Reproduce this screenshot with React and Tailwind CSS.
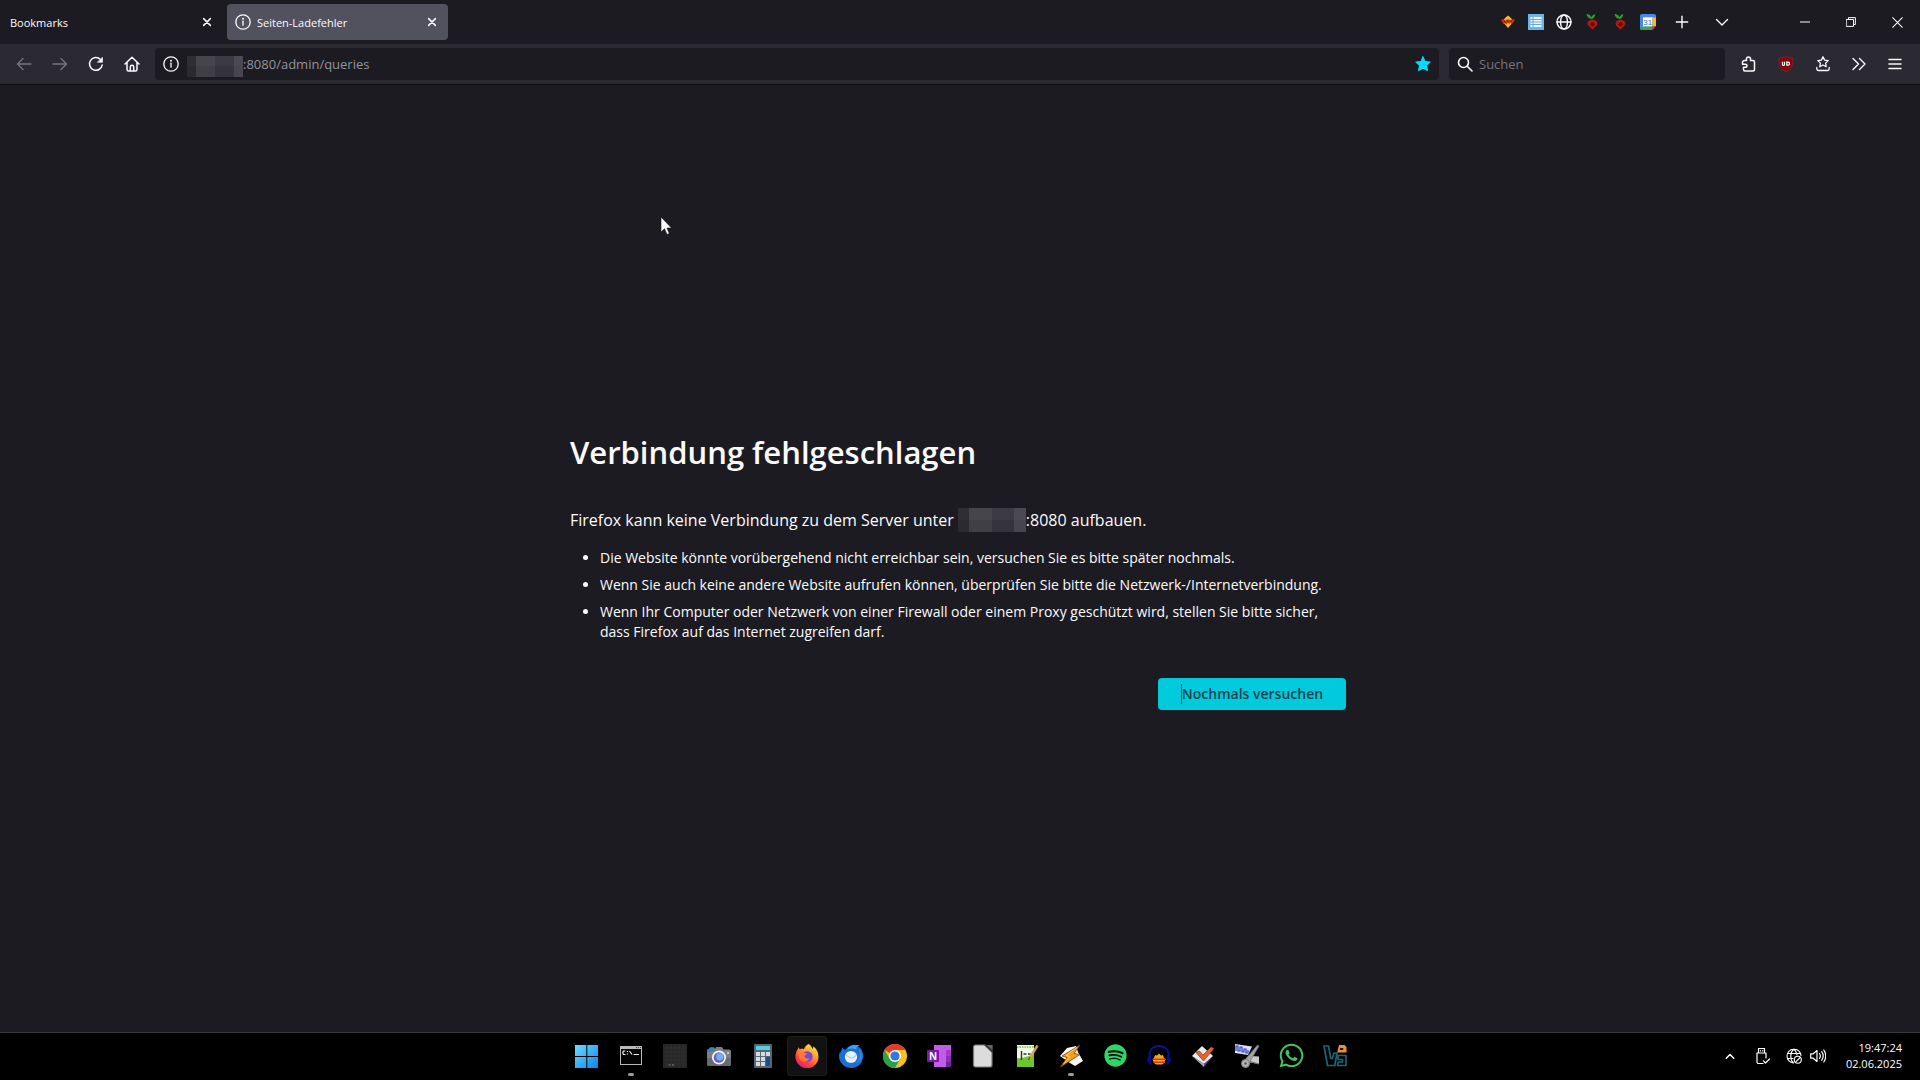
import { FaSpotify, FaWhatsapp } from 'react-icons/fa'

// Thin white line icon used in the browser chrome
function Line({ size = 16, width = 1.4, className = '', children }) {
    return (
        <svg
            width={size}
            height={size}
            viewBox="0 0 16 16"
            fill="none"
            stroke="currentColor"
            strokeWidth={width}
            strokeLinecap="round"
            strokeLinejoin="round"
            className={`shrink-0 ${className}`}
            aria-hidden="true"
        >
            {children}
        </svg>
    )
}

function InfoIcon() {
    return (
        <Line width={1.3}>
            <circle cx="8" cy="8" r="7.2" />
            <path d="M8 7.2v4" />
            <circle cx="8" cy="4.7" r=".4" fill="currentColor" />
        </Line>
    )
}

function CloseIcon() {
    return (
        <Line size={12} width={2}>
            <path d="M3.5 3.5l9 9M12.5 3.5l-9 9" />
        </Line>
    )
}

// Pixelated block that hides a host name
function Redacted({ className }) {
    return (
        <span className={`inline-grid grid-cols-[1fr_2fr_2fr_1fr] overflow-hidden ${className}`}>
            <span className="bg-[#2f2e35]" />
            <span className="bg-[#45454b]" />
            <span className="bg-[#3c3b43]" />
            <span className="bg-[#4b4a52]" />
            <span className="bg-[#2b2a31]" />
            <span className="bg-[#3f3f45]" />
            <span className="bg-[#35343c]" />
            <span className="bg-[#47464e]" />
        </span>
    )
}

/* Pinned tab icons */

function SupermanIcon() {
    return (
        <svg width="16" height="16" viewBox="0 0 16 16">
            <path d="M5 4l3-2.500L11 4l2.500 3.500L8 14 2.500 7.500z" fill="#f5bd1f" />
            <path d="M1 5.500h3.500l1 1.500 1.300-1.500h2.700l.5 1 1-1H15L13.500 8l-2 2-1-1.500L9 10 8 8.500 6.500 10.500 5 9l-1.500 1z" fill="#cf3314" />
            <path d="M4 7l2 1.500M7 6l1 2M10 7l2 .5" stroke="#5c1606" strokeWidth=".8" />
        </svg>
    )
}

function ListIcon() {
    return (
        <svg width="16" height="16" viewBox="0 0 16 16">
            <path d="M0 0h16v16H0z" fill="#6fb2e6" />
            <path d="M2.500 3h11v10h-11z" fill="#eaf5fd" />
            <path d="M2.500 5.500h11M2.500 8h11M2.500 10.500h11M5 3v10" stroke="#5ba3dc" strokeWidth=".9" />
        </svg>
    )
}

function GlobeIcon() {
    return (
        <Line width={1.4}>
            <circle cx="8" cy="8" r="7" />
            <ellipse cx="8" cy="8" rx="3.500" ry="7" />
            <path d="M1 8h14" />
        </Line>
    )
}

function PiholeIcon() {
    return (
        <svg width="16" height="18" viewBox="0 0 16 18">
            <path d="M7.500 6C4.500 5.500 2.800 3.500 2.500 1c2.500.2 4.300 1.300 5 3.200.8-1.800 2-2.700 3.800-2.900C11 4 9.700 5.500 7.500 6z" fill="#2f9e32" />
            <path d="M8.500 6.500c1.200.7 2 .4 3.400 1.300 1.700 1.200 1.800 2.800 1.100 4.300-.8 1.600-2.800 2.500-4.500 4.600-1.800-2.100-3.900-3-4.600-4.600-.7-1.500-.6-3.100 1-4.300 1.500-.9 2.400-.6 3.600-1.300z" fill="#b5170e" />
            <circle cx="8.500" cy="11.300" r="2" fill="#5e0805" />
        </svg>
    )
}

function CalendarIcon() {
    return (
        <svg width="16" height="16" viewBox="0 0 16 16">
            <path d="M2 0h12a2 2 0 012 2v3H0V2a2 2 0 012-2z" fill="#4a86ee" />
            <path d="M0 4h4v12H2a2 2 0 01-2-2z" fill="#4a86ee" />
            <path d="M12.500 3.500H16V12h-3.500z" fill="#fbbc04" />
            <path d="M0 12.500h12.500V16H2a2 2 0 01-2-2z" fill="#34a853" />
            <path d="M12.500 12H16l-3.500 4z" fill="#ea4335" />
            <path d="M3 3.300h9.500v9.200H3z" fill="#fff" />
            <text x="7.800" y="10.800" textAnchor="middle" fontSize="8" fontFamily="Liberation Sans, sans-serif" fill="#2f6cd0">31</text>
        </svg>
    )
}

/* Taskbar icons */

function WindowsIcon() {
    return (
        <svg width="24" height="24" viewBox="0 0 24 24">
            <defs>
                <linearGradient id="win" x1="0" y1="0" x2="1" y2="1">
                    <stop offset="0" stopColor="#6bdcff" />
                    <stop offset="1" stopColor="#0a86ea" />
                </linearGradient>
            </defs>
            <path d="M0 1h11.300v11H0zM12.300 1H23v11H12.300zM0 13h11.300v11H0zM12.300 13H23v11H12.300z" fill="url(#win)" />
        </svg>
    )
}

function TerminalIcon() {
    return (
        <svg width="24" height="24" viewBox="0 0 24 24">
            <path d="M1 2h22v19H1z" fill="#b9b9b9" />
            <path d="M2 5h20v15H2z" fill="#050505" />
            <path d="M17 3.500h1M19 3.500h1M21 3.500h1" stroke="#444" />
            <path d="M6.500 7H4.500L4 7.500v2.500l.5.500h2M8.500 7v1M8.500 9.500v1M10.500 7l2.500 3.500M14.500 10.500H20" stroke="#eee" strokeWidth="1.200" fill="none" />
        </svg>
    )
}

function KeypadIcon() {
    return (
        <svg width="24" height="24" viewBox="0 0 24 24">
            <path d="M0 0h24v24H0z" fill="#262626" />
            <path d="M0 4h24M0 8h24M0 12h24M0 16h24M0 20h24M4 0v24M8 0v24M12 0v24M16 0v24M20 0v24" stroke="#343434" strokeWidth=".7" />
            <path d="M5.500 21h2M9 21h2" stroke="#888" />
        </svg>
    )
}

function CameraIcon() {
    return (
        <svg width="24" height="24" viewBox="0 0 24 24">
            <path d="M2 5l1-1.500h4L8 5l1-2h6l1.500 2.500H22a2 2 0 012 2V20a2 2 0 01-2 2H2a2 2 0 01-2-2V7a2 2 0 012-2z" fill="#7a8087" />
            <path d="M0 8V7a2 2 0 012-2l1-1.500h4L8 5 6 8z" fill="#3c87a7" />
            <path d="M0 14h24v6a2 2 0 01-2 2H2a2 2 0 01-2-2z" fill="#666b71" />
            <circle cx="12" cy="13.500" r="7" fill="#f4f4f6" />
            <circle cx="12" cy="13.500" r="5.300" fill="#6a5fc5" />
            <circle cx="12.800" cy="12.700" r="3.700" fill="#78aef0" />
            <circle cx="21" cy="9" r="1" fill="#d9e2e7" />
        </svg>
    )
}

function CalculatorIcon() {
    return (
        <svg width="24" height="24" viewBox="0 0 24 24">
            <rect x="3" width="18" height="24" rx="1" fill="#596571" />
            <path d="M5 2h14v4H5z" fill="#52cfe3" />
            <path d="M5 8h4v4H5zM10 8h4v4h-4zM5 13h4v4H5zM10 13h4v4h-4zM5 18h4v4H5zM10 18h4v4h-4zM15 8h4v4h-4z" fill="#d6dbe0" />
            <path d="M15 13h4v9h-4z" fill="#17508d" />
        </svg>
    )
}

function FirefoxIcon() {
    return (
        <svg width="24" height="24" viewBox="0 0 24 24">
            <defs>
                <linearGradient id="fox" x1=".85" y1="0" x2=".25" y2="1">
                    <stop offset="0" stopColor="#fff04a" />
                    <stop offset=".4" stopColor="#ff9a2b" />
                    <stop offset=".7" stopColor="#ff4a3d" />
                    <stop offset="1" stopColor="#e5127f" />
                </linearGradient>
            </defs>
            <path d="M13.500 0c2.500 1.300 3.300 3 3.800 4.800 1-.6 1-1.600.9-2.600 3.300 2.500 5.300 6.200 5.300 10.300A11.500 11.500 0 01.500 13c0-3.500 1-6 2.500-8.200L3.500 3c.3 1 .7 1.600 1.300 2.300 1.300-.5 2.700-.6 4-.1.8-2.200 2.400-4 4.700-5.200z" fill="url(#fox)" />
            <circle cx="12.300" cy="12.500" r="5.300" fill="#7548dc" />
            <path d="M3.300 8.500c2.200-1.300 4.500-1 6.300.4 1 0 2.100.2 2.500.8-.3 1-2.300 1.200-2.600 2.300.3 2.500 3.200 3.200 5.300 2-2.300 5.300-9.500 4.200-10.800-.5z" fill="#ff7a31" />
        </svg>
    )
}

function ThunderbirdIcon() {
    return (
        <svg width="24" height="24" viewBox="0 0 24 24">
            <path d="M3.500 3.500C4.200 5 5.500 5.800 7 5.500 9 2 14.500-.500 20.500 1.500c-.8.3-1.200.7-1.500 1.200C22.500 3.500 24 8 24 12.500 24 19 19 24 12.500 24 6 24 0 19.500 0 12c0-2 .7-3.500 1.500-4.500l.3 2C2 7 2.500 5 3.500 3.500z" fill="#1a6fd4" />
            <path d="M8 5.500C10.500 1.500 15.500.300 20.500 1.500c-3 .8-3.700 2.200-3 4.500C15 4.300 11.500 4 8 5.500z" fill="#3ba5f4" />
            <path d="M19.500 5c2.500 5 1.500 11-3 14.500 5-1 7.500-5 7-9.500-.4-2.500-2-4.300-4-5z" fill="#2c86e6" />
            <ellipse cx="12" cy="13" rx="6.200" ry="6" fill="#e6f0fa" />
            <path d="M7 10.500c2 2.500 3.500 3.500 5.500 3.500 2.300 0 3.700-1.500 5-3.500" stroke="#a7c8ea" strokeWidth="1.200" fill="none" />
        </svg>
    )
}

function ChromeIcon() {
    return (
        <svg width="24" height="24" viewBox="0 0 24 24">
            <circle cx="12" cy="12" r="12" fill="#fbc116" />
            <path d="M12 12L1.600 6A12 12 0 0122.400 6H12z" fill="#e33b2e" />
            <path d="M1.600 6a12 12 0 0010.400 18l5.200-9L12 12 6.800 15z" fill="#2aa24c" />
            <circle cx="12" cy="12" r="6" fill="#fff" />
            <circle cx="12" cy="12" r="4.600" fill="#3277e6" />
        </svg>
    )
}

function OneNoteIcon() {
    return (
        <svg width="24" height="24" viewBox="0 0 24 24">
            <path d="M7 1h17v22H7z" fill="#c35de8" />
            <path d="M19 6h5v6h-5z" fill="#a33bd0" />
            <path d="M19 12h5v6h-5z" fill="#8c2fbb" />
            <path d="M19 18h5v5h-5z" fill="#6f2596" />
            <rect y="6" width="12" height="12" rx="1" fill="#7719aa" />
            <text x="6" y="15.500" textAnchor="middle" fontSize="10" fontWeight="700" fill="#fff">N</text>
        </svg>
    )
}

function LibreOfficeIcon() {
    return (
        <svg width="24" height="24" viewBox="0 0 24 24">
            <path d="M4.500 1h9.500l7 7v13a2 2 0 01-2 2H4.500a2 2 0 01-2-2V3a2 2 0 012-2z" fill="#dcdcdc" stroke="#77797a" strokeWidth="1.200" />
            <path d="M13 1h8.500v8z" fill="#3b3b3b" />
            <path d="M16 1h5.500v5z" fill="#696969" />
        </svg>
    )
}

function NotepadIcon() {
    return (
        <svg width="24" height="24" viewBox="0 0 24 24">
            <path d="M2 1h17v22H2z" fill="#f3f7ea" />
            <path d="M2 14c6 1 11-2 17-4v13H2z" fill="#71c52c" />
            <path d="M2 3h17" stroke="#79b947" strokeWidth="1.600" strokeDasharray="1.500 1" />
            <path d="M6.500 7v9M8.500 10h3M13 10h2.500" stroke="#26382a" strokeWidth="1.400" />
            <path d="M22.500 1.500l-8 13" stroke="#d2a73c" strokeWidth="2.400" />
            <path d="M15 13l-1.500 3" stroke="#555" strokeWidth="1.400" />
        </svg>
    )
}

function WinampIcon() {
    return (
        <svg width="24" height="24" viewBox="0 0 24 24">
            <path d="M8 4l9-2 2 6 5 9-8 5-5-3-10-7z" fill="#f7f7f5" />
            <path d="M21 1L3 12l5 1.500L1.500 23 21 10.500l-6-1z" fill="#f49a1c" stroke="#7b4a0d" strokeWidth=".8" />
            <path d="M18 3.500L7 11.500l4 1-6 7" stroke="#ffcf65" fill="none" />
        </svg>
    )
}

function AudacityIcon() {
    return (
        <svg width="24" height="24" viewBox="0 0 24 24">
            <path d="M2.500 14C1.500 6.500 5.500 2 12 2s10.500 4.500 9.500 12" fill="none" stroke="#10109c" strokeWidth="1.800" />
            <path d="M4 10.500c-5 1-5 9.500.5 10.500zM20 10.500c5 1 5 9.500-.5 10.500z" fill="#0b0b8c" />
            <path d="M7 19l-1.500-4 1.500-1 1-3 2 .500 2-2 2 2 2-.500 1 3 1.500 1L17 19l-2 1.500H9z" fill="#f3a41d" />
            <path d="M6 14.500h12.500v1.500H6zM6.500 17.500h11.500V19H6.500z" fill="#e0341d" />
        </svg>
    )
}

function CheckIcon() {
    return (
        <svg width="24" height="24" viewBox="0 0 24 24">
            <path d="M1 12L11 2l11 10-9 8z" fill="#e9e9f0" />
            <path d="M1 12l12 8v3z" fill="#a9adc6" />
            <path d="M13 20l9-8-9 11z" fill="#4c557f" />
            <path d="M5 8.500l3.500-1.500 3.500 4L20 3l3 1.500L12.500 17z" fill="#e4642a" stroke="#93380f" strokeWidth=".7" />
        </svg>
    )
}

function EditorIcon() {
    return (
        <svg width="24" height="24" viewBox="0 0 24 24">
            <path d="M0 0l17 2.500L13 11 0 9z" fill="#dfe3f7" />
            <path d="M1 7V2h2v5h2V3h2v5h2V5h2v4h2V6" stroke="#2f3fc4" strokeWidth="1.200" fill="none" />
            <path d="M15 12l9 .5V20l-12-2z" fill="#c9c9c9" />
            <path d="M13 17l11 3" stroke="#6d6d6d" />
            <path d="M22.500 1L24 2 13 21l-5-3z" fill="#a2a2a2" stroke="#707070" strokeWidth=".6" />
            <circle cx="10.500" cy="19.500" r="4" fill="#b2b2b2" stroke="#808080" />
            <circle cx="10.500" cy="19.500" r="1.200" fill="#555" />
        </svg>
    )
}

function VncIcon() {
    return (
        <svg width="24" height="24" viewBox="0 0 24 24" fill="none" strokeWidth="1.700" strokeLinejoin="round">
            <path d="M1 2h4.500l2.300 12.500h1.700L11 9h3l-2.200 12.500H4.500z" stroke="#1c6673" />
            <path d="M15 11.500h8v10h-8.500l.6-3.500h4.400v-2.500H15z" stroke="#1c6673" />
            <path d="M16 1h5.500l2 2v5.500h-9.300z" fill="#ec8f3c" />
            <path d="M17.200 4h3v2h-3.400z" fill="#1b0e03" />
        </svg>
    )
}

const pinnedTabs = [
    { name: 'Superman', icon: <SupermanIcon /> },
    { name: 'Liste', icon: <ListIcon /> },
    { name: 'Web', icon: <GlobeIcon /> },
    { name: 'Pi-hole 1', icon: <PiholeIcon /> },
    { name: 'Pi-hole 2', icon: <PiholeIcon /> },
    { name: 'Kalender', icon: <CalendarIcon /> },
]

const apps = [
    { name: 'Start', icon: <WindowsIcon /> },
    { name: 'Eingabeaufforderung', icon: <TerminalIcon />, running: true },
    { name: 'Tastenfeld', icon: <KeypadIcon /> },
    { name: 'Kamera', icon: <CameraIcon /> },
    { name: 'Rechner', icon: <CalculatorIcon /> },
    { name: 'Firefox', icon: <FirefoxIcon />, active: true },
    { name: 'Thunderbird', icon: <ThunderbirdIcon /> },
    { name: 'Chrome', icon: <ChromeIcon /> },
    { name: 'OneNote', icon: <OneNoteIcon /> },
    { name: 'LibreOffice', icon: <LibreOfficeIcon /> },
    { name: 'Notepad++', icon: <NotepadIcon /> },
    { name: 'Winamp', icon: <WinampIcon />, running: true },
    { name: 'Spotify', icon: <FaSpotify size={23} color="#2fd566" /> },
    { name: 'Audacity', icon: <AudacityIcon /> },
    { name: 'Aufgaben', icon: <CheckIcon /> },
    { name: 'Audio-Editor', icon: <EditorIcon /> },
    { name: 'WhatsApp', icon: <FaWhatsapp size={27} color="#3fc565" /> },
    { name: 'VNC', icon: <VncIcon /> },
]

function IconButton({ label, className, children }) {
    return (
        <button type="button" aria-label={label} className={`flex items-center justify-center shrink-0 ${className}`}>
            {children}
        </button>
    )
}

function TabBar() {
    return (
        <div className="flex h-11 items-center bg-[#1c1b22] text-[11px] text-[#fbfbfe]">
            <div className="flex h-9 w-[225px] items-center justify-between px-[10px]">
                <span className="pt-0.5">Bookmarks</span>
                <IconButton label="Tab schließen" className="size-4"><CloseIcon /></IconButton>
            </div>
            <div className="ml-0.5 flex h-9 w-[221px] items-center rounded bg-[#52525e] px-2">
                <InfoIcon />
                <span className="ml-1.5 flex-1 pt-0.5">Seiten-Ladefehler</span>
                <IconButton label="Tab schließen" className="size-4"><CloseIcon /></IconButton>
            </div>

            <div className="ml-auto flex items-center">
                {pinnedTabs.map((tab) => (
                    <IconButton key={tab.name} label={tab.name} className="h-9 w-7">{tab.icon}</IconButton>
                ))}
            </div>
            <IconButton label="Neuer Tab" className="h-9 w-10">
                <Line size={14} width={1.6}><path d="M8 1.500v13M1.500 8h13" /></Line>
            </IconButton>
            <IconButton label="Alle Tabs auflisten" className="h-9 w-10">
                <Line width={1.4}><path d="M2.500 5.500L8 11l5.500-5.500" /></Line>
            </IconButton>

            {/* Window controls */}
            <div className="ml-10 flex">
                <IconButton label="Minimieren" className="h-11 w-[46px]">
                    <Line size={10} width={1.6}><path d="M0 8h16" /></Line>
                </IconButton>
                <IconButton label="Verkleinern" className="h-11 w-[46px]">
                    <Line size={10} width={1.6}><path d="M1 4h11v11H1zM4 4V1h11v11h-3" /></Line>
                </IconButton>
                <IconButton label="Schließen" className="h-11 w-[46px]">
                    <Line size={11} width={1.5}><path d="M1 1l14 14M15 1L1 15" /></Line>
                </IconButton>
            </div>
        </div>
    )
}

function Toolbar() {
    return (
        <div className="flex h-[41px] items-center border-b border-[#0c0c0d] bg-[#2b2a33] text-[#fbfbfe]">
            <div className="ml-1.5 flex">
                <IconButton label="Zurück" className="h-8 w-9 text-[#76757c]">
                    <Line><path d="M15 8H1.500M7 2.500L1.500 8 7 13.500" /></Line>
                </IconButton>
                <IconButton label="Vor" className="h-8 w-9 text-[#76757c]">
                    <Line><path d="M1 8h13.500M9 2.500L14.500 8 9 13.500" /></Line>
                </IconButton>
                <IconButton label="Neu laden" className="h-8 w-9">
                    <Line width={1.5}>
                        <path d="M14.200 9A6.400 6.400 0 1112.500 3.500" />
                        <path d="M14.500 1.500v4.800H9.700z" fill="currentColor" strokeWidth=".6" />
                    </Line>
                </IconButton>
                <IconButton label="Startseite" className="h-8 w-9">
                    <Line width={1.5}>
                        <path d="M1 8l7-6.800L15 8M3 6.500v7a1.500 1.500 0 001.500 1.500h7a1.500 1.500 0 001.500-1.500v-7M6.300 15v-4a1.700 1.700 0 013.400 0v4" />
                    </Line>
                </IconButton>
            </div>

            {/* Address bar */}
            <div className="ml-[5px] flex h-8 flex-1 items-center rounded bg-[#1c1b22] px-2">
                <InfoIcon />
                <Redacted className="ml-2 mt-1 h-[21px] w-14 shrink-0" />
                <input
                    aria-label="Adresse"
                    defaultValue=":8080/admin/queries"
                    className="min-w-0 flex-1 bg-transparent pt-0.5 text-[13px] text-[#94939a] outline-none"
                />
                <IconButton label="Lesezeichen bearbeiten" className="size-4 text-[#00ddff]">
                    <Line width={1}>
                        <path d="M8 .800l2.200 4.700 5.100.6-3.800 3.500 1 5.100L8 12.200l-4.500 2.500 1-5.100L.700 6.100l5.100-.6z" fill="currentColor" />
                    </Line>
                </IconButton>
            </div>
            <label className="ml-2.5 flex h-8 w-[276px] items-center gap-1.5 rounded bg-[#1c1b22] px-2">
                <Line width={1.6}>
                    <circle cx="6.500" cy="6.500" r="5" />
                    <path d="M10.300 10.300L15 15" />
                </Line>
                <input
                    aria-label="Suchen"
                    placeholder="Suchen"
                    className="min-w-0 flex-1 bg-transparent pt-0.5 text-[13px] outline-none placeholder:text-[#76757c]"
                />
            </label>

            <div className="ml-[5px] mr-[7px] flex">
                <IconButton label="Erweiterungen" className="h-8 w-[37px]">
                    <Line width={1.5}>
                        <path d="M5.500 4.500V3a2 2 0 014 0v1.500H12A1.500 1.500 0 0113.500 6v7.500A1.500 1.500 0 0112 15H4a1.500 1.500 0 01-1.500-1.500v-2.200h2a1.500 1.500 0 000-3h-3V6.500A2 2 0 013.500 4.500z" />
                    </Line>
                </IconButton>
                <IconButton label="uBlock Origin" className="h-8 w-[37px]">
                    <svg width="16" height="16" viewBox="0 0 16 16">
                        <path d="M8 0c2 1.500 4 2 7 2 0 7-1 11-7 14C2 13 1 9 1 2c3 0 5-.5 7-2z" fill="#80080d" stroke="#a32427" strokeWidth=".6" />
                        <path d="M4.500 5.800v2.700q0 1 1 1t1-1V5.800" stroke="#fff" strokeWidth="1.200" fill="none" />
                        <path d="M8.800 6.200h1.200a1.500 1.500 0 010 3H8.800z" stroke="#fff" strokeWidth="1.200" fill="none" />
                    </svg>
                </IconButton>
                <IconButton label="Lesezeichen" className="h-8 w-[37px]">
                    <Line width={1.3}>
                        <path d="M8 .800l1.600 3.300 3.600.5-2.600 2.500.6 3.600L8 9l-3.200 1.700.6-3.600-2.600-2.500 3.600-.5zM1.800 11.500v1.300A1.700 1.700 0 003.500 14.500h9a1.700 1.700 0 001.700-1.700v-1.300" />
                    </Line>
                </IconButton>
                <IconButton label="Weitere Werkzeuge" className="h-8 w-9">
                    <Line width={1.4}><path d="M2 2.500L7.500 8 2 13.500M8.500 2.500L14 8l-5.500 5.500" /></Line>
                </IconButton>
                <IconButton label="Menü" className="h-8 w-9">
                    <Line width={1.4}><path d="M2 3.500h12M2 8h12M2 12.500h12" /></Line>
                </IconButton>
            </div>
        </div>
    )
}

function ErrorPage() {
    return (
        <main className="flex flex-1 items-center justify-center bg-[#1c1b22] pr-1 pt-6 text-[#fbfbfe]">
            <div className="w-[776px] max-w-full">
                <h1 className="text-[31px] font-semibold leading-10">Verbindung fehlgeschlagen</h1>
                <p className="mt-9 flex h-6 items-center text-base">
                    Firefox kann keine Verbindung zu dem Server unter
                    <Redacted className="ml-1 h-6 w-[68px]" />
                    :8080 aufbauen.
                </p>
                <ul className="mt-4 list-disc space-y-[7px] pl-[30px] text-sm leading-5">
                    <li>Die Website könnte vorübergehend nicht erreichbar sein, versuchen Sie es bitte später nochmals.</li>
                    <li>Wenn Sie auch keine andere Website aufrufen können, überprüfen Sie bitte die Netzwerk-/Internetverbindung.</li>
                    <li>Wenn Ihr Computer oder Netzwerk von einer Firewall oder einem Proxy geschützt wird, stellen Sie bitte sicher, dass Firefox auf das Internet zugreifen darf.</li>
                </ul>
                <div className="mt-9 flex justify-end">
                    <button type="button" className="flex h-8 w-[188px] items-center justify-center rounded bg-[#00cadb] text-sm font-semibold text-[#15414e]">
                        <span className="h-5 w-px bg-[#15414e]" />
                        Nochmals versuchen
                    </button>
                </div>
            </div>
        </main>
    )
}

function Taskbar() {
    return (
        <footer className="grid h-12 grid-cols-[1fr_auto_1fr] items-center border-t border-[#3a3a3c] bg-black pb-0.5 text-white">
            <div />
            <nav className="flex gap-1 pl-0.5" aria-label="Taskleiste">
                {apps.map((app) => (
                    <button
                        key={app.name}
                        type="button"
                        aria-label={app.name}
                        className={`relative flex size-10 items-center justify-center rounded ${app.active ? 'bg-[#121212] ring-1 ring-inset ring-[#1d1d1d]' : ''}`}
                    >
                        {app.icon}
                        {app.running && <span className="absolute bottom-0 h-[3px] w-1.5 rounded-full bg-[#9a9a9a]" />}
                    </button>
                ))}
            </nav>
            <div className="flex items-center justify-end pr-[18px]">
                <IconButton label="Ausgeblendete Symbole" className="w-8">
                    <Line size={12} width={2}><path d="M3 11l5-5 5 5" /></Line>
                </IconButton>
                <IconButton label="USB" className="w-8">
                    <Line width={1.2}>
                        <path d="M4.500 5V.500h6V5M3 5h9v5M9 15.500H4.500A1.500 1.500 0 013 14V5M6.500 2.500v.5M8.700 2.500v.5M9.500 13l2 2 4-4" />
                    </Line>
                </IconButton>
                <IconButton label="Netzwerk" className="w-8">
                    <Line width={1.1}>
                        <path d="M7.500 15A7 7 0 1115 7.500M1.500 5.500h13M1.500 10.500H7M7.500 15C3.500 11 4 4 8 1c1.800 1.800 2.700 4 3 6" />
                        <circle cx="11.800" cy="11.800" r="3.500" />
                        <path d="M9.500 14.200l4.700-4.700" />
                    </Line>
                </IconButton>
                <IconButton label="Lautsprecher" className="w-4">
                    <Line width={1.2}>
                        <path d="M.700 5.800h2.500L7 2.500v11l-3.800-3.300H.700zM9.500 5.500q1.700 2.500 0 5M11.700 3.700q3 4.300 0 8.600M13.800 2q4 6 0 12" />
                    </Line>
                </IconButton>
                <time dateTime="2025-06-02T19:47:24" className="ml-5 text-right text-[11px] leading-4">
                    19:47:24<br />02.06.2025
                </time>
            </div>
        </footer>
    )
}

export default function App() {
    return (
        <div className="flex min-h-screen flex-col bg-[#1c1b22] font-['Open_Sans','Noto_Sans',sans-serif]">
            <TabBar />
            <Toolbar />
            <ErrorPage />
            <Taskbar />

            {/* Mouse pointer */}
            <svg width="12" height="20" viewBox="0 0 12 20" className="pointer-events-none absolute left-[660px] top-[216px]" aria-hidden="true">
                <path d="M1 1v15l3.500-3.300L7 18.500l2.300-1L7 12h4.500z" fill="#fff" stroke="#111" strokeWidth=".6" />
            </svg>
        </div>
    )
}
